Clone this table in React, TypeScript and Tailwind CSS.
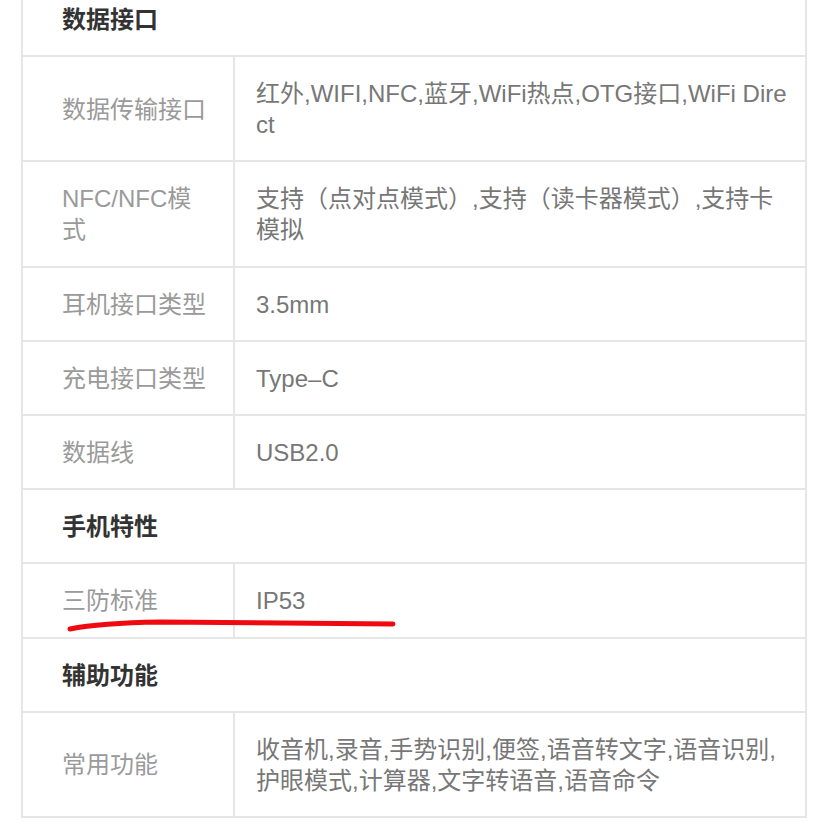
type Row = { label: string; value: string } | { section: string }

const rows: Row[] = [
  { section: '数据接口' },
  { label: '数据传输接口', value: '红外,WIFI,NFC,蓝牙,WiFi热点,OTG接口,WiFi Direct' },
  { label: 'NFC/NFC模式', value: '支持（点对点模式）,支持（读卡器模式）,支持卡模拟' },
  { label: '耳机接口类型', value: '3.5mm' },
  { label: '充电接口类型', value: 'Type–C' },
  { label: '数据线', value: 'USB2.0' },
  { section: '手机特性' },
  { label: '三防标准', value: 'IP53' },
  { section: '辅助功能' },
  { label: '常用功能', value: '收音机,录音,手势识别,便签,语音转文字,语音识别,护眼模式,计算器,文字转语音,语音命令' },
]

export default function App() {
  return (
    <div
      className="relative min-h-[825px] overflow-hidden bg-white px-[21px]"
      style={{ fontFamily: '"Liberation Sans", "Noto Sans CJK SC", sans-serif' }}
    >
      <div className="-mt-[17px] border-x-2 border-[#e6e6e6] text-[24px] leading-[31px]">
        {rows.map((row, i) =>
          'section' in row ? (
            <div key={i} className="border-b-2 border-[#e6e6e6] pb-[20.2px] pl-[39px] pt-[21px] font-bold text-[#333]">
              {row.section}
            </div>
          ) : (
            <div key={i} className="grid grid-cols-[212px_1fr] border-b-2 border-[#e6e6e6]">
              <div className="flex items-center border-r-2 border-[#e6e6e6] pb-[20.2px] pl-[39px] pr-[24px] pt-[21px] text-[#9a9a9a]">
                {row.label}
              </div>
              <div className="flex items-center pb-[20.2px] pl-[21px] pr-[14px] pt-[21px] text-[#777] [word-break:break-all]">
                {row.value}
              </div>
            </div>
          )
        )}
      </div>

      {/* red hand-drawn underline */}
      <svg className="pointer-events-none absolute left-0 top-0" width="828" height="825">
        <path
          d="M70 629 Q 100 623 160 622 L 393 624"
          fill="none"
          stroke="#ee0a10"
          strokeWidth="5"
          strokeLinecap="round"
        />
      </svg>
    </div>
  )
}
